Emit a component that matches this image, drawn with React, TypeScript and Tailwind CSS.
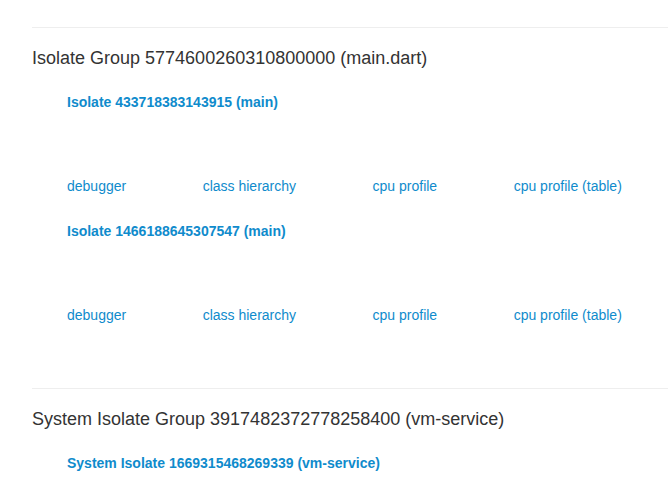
import React from "react";

type Isolate = { name: string };

const groups: { title: string; isolates: Isolate[]; system?: boolean }[] = [
  {
    title: "Isolate Group 5774600260310800000 (main.dart)",
    isolates: [
      { name: "Isolate 433718383143915 (main)" },
      { name: "Isolate 1466188645307547 (main)" },
    ],
  },
  {
    title: "System Isolate Group 3917482372778258400 (vm-service)",
    isolates: [{ name: "System Isolate 1669315468269339 (vm-service)" }],
    system: true,
  },
];

const links = ["debugger", "class hierarchy", "cpu profile", "cpu profile (table)"];

const IsolateRow = ({ isolate, system }: { isolate: Isolate; system?: boolean }) => (
  <div className="pl-[35px]">
    <a href="#" className="block text-[14px] leading-[20px] font-bold text-[#0f8bcc]">
      {isolate.name}
    </a>
    {!system && (
      <div className="mt-[64px] flex gap-[76.5px] text-[14px] leading-[20px] text-[#0f8bcc]">
        {links.map((l) => (
          <a key={l} href="#">
            {l}
          </a>
        ))}
      </div>
    )}
  </div>
);

export default function App() {
  return (
    <div
      className="min-h-[497px] bg-white pl-8 pt-[27px]"
      style={{ fontFamily: '"Liberation Sans", Arial, sans-serif' }}
    >
      {groups.map((g, gi) => (
        <div key={g.title} className={gi > 0 ? "mt-[63px]" : ""}>
          <div className="h-px bg-[#eeeeee]" />
          <h1 className="mt-[20px] text-[18px] leading-[20px] text-[#333333]">{g.title}</h1>
          <div className="mt-[24px] flex flex-col gap-[25px]">
            {g.isolates.map((iso) => (
              <IsolateRow key={iso.name} isolate={iso} system={g.system} />
            ))}
          </div>
        </div>
      ))}
    </div>
  );
}
